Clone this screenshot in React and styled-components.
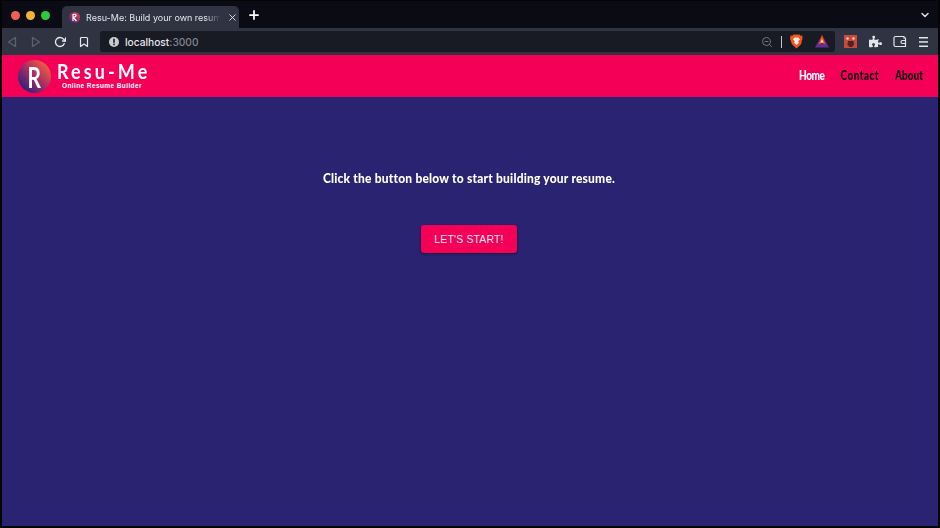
import React from 'react'
import styled, { createGlobalStyle } from 'styled-components'
import { FaPuzzlePiece } from 'react-icons/fa'
import { FiRotateCw, FiBookmark, FiZoomOut, FiPlus, FiX, FiChevronDown } from 'react-icons/fi'

const GlobalStyle = createGlobalStyle`
  html, body { margin: 0; padding: 0; background: #000; }
  * { box-sizing: border-box; }
`

const Frame = styled.div`
  width: 940px;
  height: 528px;
  display: flex;
  flex-direction: column;
  border: 2px solid #050505;
  border-top-width: 1px;
  overflow: hidden;
  background: #292372;
`
const TabStrip = styled.div`
  height: 27px;
  flex: none;
  display: flex;
  align-items: flex-end;
  padding-left: 9px;
  background: #0a0b14;
`
const Lights = styled.div`
  display: flex;
  gap: 6px;
  align-self: center;
  width: 51px;
  margin-top: 1px;
`
const Light = styled.span`
  width: 9px;
  height: 9px;
  border-radius: 50%;
  background: ${p => p.color};
`
const Tab = styled.div`
  width: 177px;
  height: 22px;
  display: flex;
  align-items: center;
  padding: 0 3px 0 7px;
  gap: 6px;
  background: #2f3342;
  border-radius: 5px 5px 0 0;
  color: #e4e6ec;
  font: 400 9px "Inter", "Liberation Sans", sans-serif;

  svg {
    flex: none;
  }
`
const TabTitle = styled.span`
  flex: 1;
  white-space: nowrap;
  -webkit-mask-image: linear-gradient(to right, #000 88%, transparent);
  mask-image: linear-gradient(to right, #000 88%, transparent);
`
const NewTab = styled.div`
  margin-left: 8px;
  align-self: center;
  display: flex;
  color: #fff;
`
const TabStripEnd = styled.div`
  margin-left: auto;
  margin-right: 7px;
  align-self: center;
  display: flex;
  color: #d8dae0;
`
const Toolbar = styled.div`
  height: 27px;
  flex: none;
  display: flex;
  align-items: center;
  padding: 0 9px 0 3px;
  background: #2f3342;
`
const NavIcons = styled.div`
  width: 95px;
  display: flex;
  align-items: center;
  gap: 10px;
  color: #e8e9ee;
`
const IconSlot = styled.span`
  width: 14px;
  height: 14px;
  display: flex;
  align-items: center;
  justify-content: center;
  color: ${p => p.color || 'inherit'};
`
const UrlBar = styled.div`
  width: 735px;
  height: 21px;
  flex: none;
  display: flex;
  align-items: center;
  padding: 0 6px 0 7px;
  background: #181b24;
  border-radius: 3px;
  font: 500 10.2px "Inter", "Liberation Sans", sans-serif;
  color: #e6e7eb;
`
const Host = styled.span`
  margin-left: 4px;
`
const Port = styled.span`
  color: #7f8390;
`
const UrlActions = styled.div`
  margin-left: auto;
  display: flex;
  align-items: center;
  gap: 8px;
`
const Divider = styled.span`
  width: 1px;
  height: 12px;
  margin-left: -1px;
  background: #c4c6cc;
`
const BatSlot = styled.span`
  display: flex;
  margin-left: 4px;
`
const Extensions = styled.div`
  margin-left: 9px;
  flex: 1;
  display: flex;
  align-items: center;
  justify-content: space-between;
  color: #e4e5ea;
`
const NavBar = styled.header`
  height: 42px;
  flex: none;
  display: flex;
  align-items: center;
  justify-content: space-between;
  padding: 0 15px 0 16px;
  background: #f50057;
`
const Brand = styled.div`
  display: flex;
  align-items: center;
  gap: 6px;
`
const LogoMark = styled.div`
  width: 33px;
  height: 33px;
  border-radius: 50%;
  display: flex;
  align-items: center;
  justify-content: center;
  background: linear-gradient(45deg, #34227c 15%, #a32d63 50%, #f9603f 90%);
`
const LogoLetter = styled.span`
  color: #fff;
  font: 700 29px/33px "Lato", "Liberation Sans", sans-serif;
  transform: scaleX(.72);
`
const BrandText = styled.div`
  display: flex;
  flex-direction: column;
  margin-bottom: 3px;
`
const BrandName = styled.div`
  color: #fff;
  font: 700 18px/21px "Lato", "Liberation Sans", sans-serif;
  letter-spacing: 3.1px;
  white-space: nowrap;
  transform: scaleY(1.15);
`
const Tagline = styled.div`
  color: #fff;
  font: 700 6.5px/7px "Liberation Sans", sans-serif;
  letter-spacing: 0.4px;
  margin-left: 5px;
  white-space: nowrap;
`
const Links = styled.nav`
  display: flex;
  gap: 16px;
  padding-bottom: 2px;
`
const NavLink = styled.a`
  color: ${p => (p.$active ? '#fff' : '#0a0410')};
  font: 900 10px/14px "Lato", "Liberation Sans", sans-serif;
  letter-spacing: ${p => p.$tracking || 0}px;
  transform: scaleY(1.3);
`
const Main = styled.main`
  flex: 1;
  display: flex;
  flex-direction: column;
  align-items: center;
  padding: 74px 2px 0 0;
  background: #292372;
`
const Prompt = styled.h2`
  margin: 0;
  color: #fff;
  font: 900 12px/16px "Lato", "Liberation Sans", sans-serif;
  letter-spacing: 0.2px;
  transform: scaleY(1.12);
`
const StartButton = styled.button`
  margin-top: 38px;
  width: 96px;
  height: 28px;
  border: 0;
  border-radius: 3px;
  background: #f50057;
  color: #f7e6ee;
  font: 400 10.5px "Liberation Sans", sans-serif;
  letter-spacing: 0.15px;
  box-shadow: 0 1px 3px rgba(0, 0, 0, .35), 0 1px 1px rgba(0, 0, 0, .2);
`

const Favicon = () => (
  <svg width="11" height="11" viewBox="0 0 11 11">
    <defs>
      <linearGradient id="fav" x1="0" y1="1" x2="1" y2="0">
        <stop offset="0" stopColor="#34227c" />
        <stop offset="1" stopColor="#f9404f" />
      </linearGradient>
    </defs>
    <circle cx="5.5" cy="5.5" r="5.5" fill="url(#fav)" />
    <path d="M4 9V2.5c2-.6 3.4 0 3 1.4C6.8 4.8 5.6 5.2 4.4 5.4L7.4 9" fill="none" stroke="#fff" strokeWidth="1.2" />
  </svg>
)

const Triangle = ({ flip }) => (
  <svg width="10" height="12" viewBox="0 0 10 12" style={flip ? { transform: 'scaleX(-1)' } : undefined}>
    <path d="M8.5 1.5 1.5 6l7 4.5z" fill="none" stroke="#5d6170" strokeWidth="1.3" strokeLinejoin="round" />
  </svg>
)

const InfoDot = () => (
  <svg width="12" height="12" viewBox="0 0 12 12">
    <circle cx="6" cy="6" r="5" fill="#c9cbd1" />
    <rect x="5.2" y="2.800" width="1.600" height="4" fill="#181b24" />
    <rect x="5.2" y="7.600" width="1.600" height="1.600" fill="#181b24" />
  </svg>
)

const BraveShield = () => (
  <svg width="13" height="15" viewBox="0 0 13 15">
    <path d="M3.5.5h6l1 1.2 1.8-.2.2 3.4-.7 1.6-.6 3.4-4.7 4.6-4.7-4.6L.7 6.5 0 4.9l.6-3.4 1.9.2z" fill="#f1561f" />
    <path d="M6.5 11 4 8.8l1-1L3 5.2l1.5-1.6h4L10 5.200l-2 2.600 1 1z" fill="#fff" opacity=".88" />
  </svg>
)

const BatTriangle = () => (
  <svg width="14" height="13" viewBox="0 0 14 13">
    <path d="M7 0 14 12.500H0z" fill="#662d91" />
    <path d="M7 0 10.500 9.500 7 7.500 3.500 9.500z" fill="#ff5000" />
    <path d="M7 4 8.500 8 7 7.200 5.500 8z" fill="#fff" />
  </svg>
)

const ExtensionBadge = () => (
  <svg width="13" height="13" viewBox="0 0 13 13">
    <rect width="13" height="13" fill="#c9493c" />
    <circle cx="3.500" cy="3.500" r="1.300" fill="#f0c8bc" />
    <circle cx="9.500" cy="3.500" r="1.300" fill="#f0c8bc" />
    <path d="M4 6h5.500l.5 3.500-2 2.500H5.500L3.500 9.500z" fill="#4a2522" />
  </svg>
)

const Wallet = () => (
  <svg width="14" height="13" viewBox="0 0 14 13" fill="none" stroke="currentColor" strokeWidth="1.200">
    <path d="M11 3V1.500H2.500A1.500 1.500 0 0 0 1 3v7a1.500 1.500 0 0 0 1.500 1.500h10V3z" />
    <path d="M13 5.500H9.500a1.500 1.500 0 0 0 0 3H13" />
  </svg>
)

const Hamburger = () => (
  <svg width="10" height="12" viewBox="0 0 10 12" fill="currentColor">
    <rect y="1" width="9" height="1.500" />
    <rect y="5.200" width="9" height="1.500" />
    <rect y="9.500" width="9" height="1.500" />
  </svg>
)

export default function App() {
  return (
    <Frame>
      <GlobalStyle />
      <TabStrip>
        <Lights>
          <Light color="#ee5f57" />
          <Light color="#f2b437" />
          <Light color="#2bc840" />
        </Lights>
        <Tab>
          <Favicon />
          <TabTitle>Resu-Me: Build your own resum</TabTitle>
          <FiX size={11} color="#e4e6ec" />
        </Tab>
        <NewTab><FiPlus size={14} strokeWidth={3} /></NewTab>
        <TabStripEnd><FiChevronDown size={12} strokeWidth={3} /></TabStripEnd>
      </TabStrip>
      <Toolbar>
        <NavIcons>
          <IconSlot><Triangle /></IconSlot>
          <IconSlot><Triangle flip /></IconSlot>
          <IconSlot><FiRotateCw size={12} strokeWidth={2.6} /></IconSlot>
          <IconSlot><FiBookmark size={12} strokeWidth={2.4} /></IconSlot>
        </NavIcons>
        <UrlBar>
          <IconSlot><InfoDot /></IconSlot>
          <Host>localhost<Port>:3000</Port></Host>
          <UrlActions>
            <IconSlot color="#70747f"><FiZoomOut size={12} /></IconSlot>
            <Divider />
            <BraveShield />
            <BatSlot><BatTriangle /></BatSlot>
          </UrlActions>
        </UrlBar>
        <Extensions>
          <ExtensionBadge />
          <FaPuzzlePiece size={13} />
          <Wallet />
          <Hamburger />
        </Extensions>
      </Toolbar>
      <NavBar>
        <Brand>
          <LogoMark><LogoLetter>R</LogoLetter></LogoMark>
          <BrandText>
            <BrandName>Resu-Me</BrandName>
            <Tagline>Online Resume Builder</Tagline>
          </BrandText>
        </Brand>
        <Links>
          <NavLink $active $tracking={-0.4}>Home</NavLink>
          <NavLink $tracking={0.45}>Contact</NavLink>
          <NavLink>About</NavLink>
        </Links>
      </NavBar>
      <Main>
        <Prompt>Click the button below to start building your resume.</Prompt>
        <StartButton>LET'S START!</StartButton>
      </Main>
    </Frame>
  )
}
